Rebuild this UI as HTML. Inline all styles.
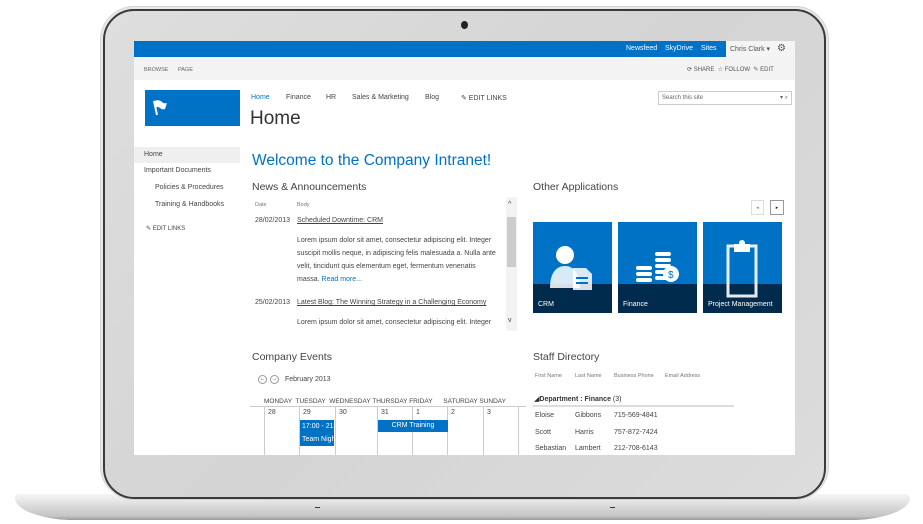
<!DOCTYPE html>
<html><head><meta charset="utf-8"><style>
*{margin:0;padding:0;box-sizing:border-box}
body{width:923px;height:524px;background:#fff;position:relative;overflow:hidden;font-family:"Liberation Sans",sans-serif;color:#444}
.a{position:absolute;white-space:nowrap}
#bez{left:100px;top:6px;width:729px;height:494px;border-radius:34px;background:#e8e8e8;border:1px solid #d4d4d4}
#bez2{left:103px;top:9px;width:723px;height:490px;border-radius:31px;background:linear-gradient(135deg,#dedede,#d4d4d4 50%,#dcdcdc);border:2px solid #3a3a3a}
#base{left:15px;top:494px;width:895px;height:26px;background:linear-gradient(#f6f6f6,#dedede 40%,#c4c4c4 85%,#999);border-radius:4px 4px 60px 60px/4px 4px 22px 22px}
#notch{left:390px;top:494px;width:148px;height:7px;background:linear-gradient(#bbb,#ececec);border-radius:0 0 8px 8px}
#scr{left:134px;top:41px;width:661px;height:414px;background:#fff;overflow:hidden}
.s{position:absolute;white-space:nowrap;font-size:7px;color:#444}
.tile{position:absolute;top:181px;width:79px;height:91px;background:#0072c6}
.tile .d{position:absolute;left:0;right:0;bottom:0;height:29px;background:#002b4d}
.tile .l{position:absolute;left:5px;bottom:5px;font-size:7px;color:#fff}
.cl{position:absolute;top:366px;width:1px;height:48px;background:#ccc}
</style></head><body>
<div class="a" id="base"></div>
<div class="a" id="notch"></div>
<div class="a" style="left:315px;top:507px;width:5px;height:1px;background:#333"></div>
<div class="a" style="left:610px;top:507px;width:5px;height:1px;background:#333"></div>
<div class="a" id="bez"></div>
<div class="a" id="bez2"></div>
<div class="a" style="left:461px;top:21px;width:7px;height:8px;border-radius:50%;background:#222"></div>
<div class="a" id="scr">
 <div class="s" style="left:0;top:0;width:661px;height:16px;background:#0072c6"></div>
 <div class="s" style="left:592px;top:0;width:69px;height:16px;background:#f4f4f4"></div>
 <div class="s" style="left:492px;top:4px;color:#fff">Newsfeed</div>
 <div class="s" style="left:531px;top:4px;color:#fff">SkyDrive</div>
 <div class="s" style="left:567px;top:4px;color:#fff">Sites</div>
 <div class="s" style="left:596px;top:4px;color:#555">Chris Clark ▾</div>
 <div class="s" style="left:643px;top:2px;font-size:10px;color:#555">⚙</div>
 <div class="s" style="left:0;top:16px;width:661px;height:23px;background:#f3f3f3"></div>
 <div class="s" style="left:10px;top:26px;font-size:5.5px;color:#666">BROWSE</div>
 <div class="s" style="left:44px;top:26px;font-size:5.5px;color:#666">PAGE</div>
 <div class="s" style="left:553px;top:25px;font-size:6px;color:#555">⟳ SHARE &nbsp;☆ FOLLOW &nbsp;✎ EDIT</div>
 <div class="s" style="left:11px;top:49px;width:95px;height:36px;background:#0072c6"></div>
 <svg class="s" style="left:18px;top:58px" width="16" height="18"><path d="M2 2 L5 16" stroke="#fff" stroke-width="2"/><path d="M2 2 Q7 0 10 3 Q12 5 15 4 L13 10 Q10 11 8 9 Q6 7 3 9Z" fill="#fff"/></svg>
 <div class="s" style="left:117px;top:53px;color:#0072c6">Home</div>
 <div class="s" style="left:152px;top:53px">Finance</div>
 <div class="s" style="left:192px;top:53px">HR</div>
 <div class="s" style="left:218px;top:53px">Sales &amp; Marketing</div>
 <div class="s" style="left:291px;top:53px">Blog</div>
 <div class="s" style="left:327px;top:53px">✎ EDIT LINKS</div>
 <div class="s" style="left:116px;top:67px;font-size:19px;color:#333">Home</div>
 <div class="s" style="left:524px;top:50px;width:134px;height:14px;border:1px solid #ccc;font-size:6px;color:#666;padding:3px 3px">Search this site<span style="position:absolute;right:3px;top:2px">▾ ⌕</span></div>
 <div class="s" style="left:0;top:106px;width:106px;height:16px;background:#efefef"></div>
 <div class="s" style="left:10px;top:110px">Home</div>
 <div class="s" style="left:10px;top:126px">Important Documents</div>
 <div class="s" style="left:21px;top:143px">Policies &amp; Procedures</div>
 <div class="s" style="left:21px;top:160px">Training &amp; Handbooks</div>
 <div class="s" style="left:12px;top:184px;font-size:6px">✎ EDIT LINKS</div>
 <div class="s" style="left:118px;top:111px;font-size:15.5px;color:#0072c6">Welcome to the Company Intranet!</div>
 <div class="s" style="left:118px;top:140px;font-size:10.5px;color:#444">News &amp; Announcements</div>
 <div class="s" style="left:121px;top:161px;font-size:5.5px;color:#777">Date</div>
 <div class="s" style="left:163px;top:161px;font-size:5.5px;color:#777">Body</div>
 <div class="s" style="left:121px;top:176px">28/02/2013</div>
 <div class="s" style="left:163px;top:176px;text-decoration:underline">Scheduled Downtime: CRM</div>
 <div class="s" style="left:163px;top:193px;line-height:13px;font-size:7px;white-space:normal;width:200px">Lorem ipsum dolor sit amet, consectetur adipiscing elit. Integer suscipit mollis neque, in adipiscing felis malesuada a. Nulla ante velit, tincidunt quis elementum eget, fermentum venenatis massa. <span style="color:#0072c6">Read more...</span></div>
 <div class="s" style="left:121px;top:258px">25/02/2013</div>
 <div class="s" style="left:163px;top:258px;text-decoration:underline">Latest Blog: The Winning Strategy in a Challenging Economy</div>
 <div class="s" style="left:163px;top:278px">Lorem ipsum dolor sit amet, consectetur adipiscing elit. Integer</div>
 <div class="s" style="left:372px;top:156px;width:11px;height:134px;background:#f3f3f3"></div>
 <div class="s" style="left:373px;top:176px;width:9px;height:50px;background:#ccc"></div>
 <div class="s" style="left:374px;top:160px">^</div>
 <div class="s" style="left:374px;top:276px">v</div>
 <div class="s" style="left:399px;top:140px;font-size:10.5px">Other Applications</div>
 <div class="s" style="left:617px;top:159px;width:13px;height:15px;border:1px solid #ddd;font-size:5px;color:#888;text-align:center;padding-top:4px">◂</div>
 <div class="s" style="left:636px;top:159px;width:14px;height:15px;border:1px solid #999;font-size:5px;color:#222;text-align:center;padding-top:4px">▸</div>
 <div class="tile" style="left:399px"><div class="d"></div>
  <svg style="position:absolute;left:16px;top:22px" width="48" height="46"><circle cx="16" cy="11" r="9" fill="#fff"/><path d="M1 44 C1 28 8 22 16 22 C24 22 30 28 31 44Z" fill="#fff" opacity=".85"/><path d="M24 24h13l6 6v16h-19z" fill="#fff" opacity=".85"/><rect x="27" y="33" width="12" height="2" fill="#0072c6"/><rect x="27" y="38" width="12" height="2" fill="#0072c6"/></svg>
  <div class="l">CRM</div></div>
 <div class="tile" style="left:484px"><div class="d"></div>
  <svg style="position:absolute;left:18px;top:28px" width="46" height="40" fill="#fff"><rect x="0" y="16" width="16" height="4" rx="2"/><rect x="0" y="22" width="16" height="4" rx="2"/><rect x="0" y="28" width="16" height="4" rx="2"/><rect x="19" y="2" width="16" height="4" rx="2"/><rect x="19" y="8" width="16" height="4" rx="2"/><rect x="19" y="14" width="16" height="4" rx="2"/><rect x="19" y="20" width="16" height="4" rx="2"/><rect x="19" y="26" width="16" height="4" rx="2"/><circle cx="35" cy="24" r="8"/><text x="32" y="28" font-size="10" fill="#0072c6" font-family="Liberation Sans">$</text></svg>
  <div class="l">Finance</div></div>
 <div class="tile" style="left:569px"><div class="d"></div>
  <svg style="position:absolute;left:23px;top:18px" width="34" height="58"><rect x="2" y="6" width="28" height="50" fill="none" stroke="#fff" stroke-width="3" opacity=".9"/><rect x="8" y="4" width="16" height="8" fill="#fff"/><circle cx="16" cy="3" r="3" fill="#fff"/></svg>
  <div class="l">Project Management</div></div>
 <div class="s" style="left:118px;top:310px;font-size:10.5px">Company Events</div>
 <div class="s" style="left:124px;top:334px;width:9px;height:9px;border:1px solid #999;border-radius:50%;font-size:6px;text-align:center;line-height:7px">←</div>
 <div class="s" style="left:136px;top:334px;width:9px;height:9px;border:1px solid #999;border-radius:50%;font-size:6px;text-align:center;line-height:7px">→</div>
 <div class="s" style="left:151px;top:335px">February 2013</div>
 <div class="s" style="left:130px;top:357px;font-size:6.5px">MONDAY &nbsp;TUESDAY &nbsp;WEDNESDAY THURSDAY FRIDAY &nbsp;&nbsp;&nbsp;&nbsp;&nbsp;SATURDAY SUNDAY</div>
 <div class="s" style="left:116px;top:365px;width:276px;height:1px;background:#ccc"></div>
 <div class="cl" style="left:130px"></div><div class="cl" style="left:165px"></div><div class="cl" style="left:201px"></div><div class="cl" style="left:243px"></div><div class="cl" style="left:278px"></div><div class="cl" style="left:313px"></div><div class="cl" style="left:349px"></div><div class="cl" style="left:384px"></div>
 <div class="s" style="left:134px;top:368px">28</div><div class="s" style="left:169px;top:368px">29</div><div class="s" style="left:205px;top:368px">30</div><div class="s" style="left:247px;top:368px">31</div><div class="s" style="left:282px;top:368px">1</div><div class="s" style="left:317px;top:368px">2</div><div class="s" style="left:353px;top:368px">3</div>
 <div class="s" style="left:166px;top:379px;width:34px;height:26px;background:#0072c6;color:#fff;overflow:hidden;line-height:13px;padding-left:2px">17:00 - 21:<br>Team Nigh</div>
 <div class="s" style="left:244px;top:379px;width:70px;height:12px;background:#0072c6;color:#fff;text-align:center;line-height:12px">CRM Training</div>
 <div class="s" style="left:399px;top:310px;font-size:10.5px">Staff Directory</div>
 <div class="s" style="left:401px;top:332px;font-size:5.5px;color:#777">First Name</div>
 <div class="s" style="left:441px;top:332px;font-size:5.5px;color:#777">Last Name</div>
 <div class="s" style="left:480px;top:332px;font-size:5.5px;color:#777">Business Phone</div>
 <div class="s" style="left:531px;top:332px;font-size:5.5px;color:#777">Email Address</div>
 <div class="s" style="left:400px;top:354px;color:#333">◢<b>Department : Finance</b> (3)</div>
 <div class="s" style="left:399px;top:364px;width:201px;height:2px;background:#ddd"></div>
 <div class="s" style="left:401px;top:371px">Eloise</div><div class="s" style="left:441px;top:371px">Gibbons</div><div class="s" style="left:480px;top:371px">715-569-4841</div>
 <div class="s" style="left:401px;top:388px">Scott</div><div class="s" style="left:441px;top:388px">Harris</div><div class="s" style="left:480px;top:388px">757-872-7424</div>
 <div class="s" style="left:401px;top:404px">Sebastian</div><div class="s" style="left:441px;top:404px">Lambert</div><div class="s" style="left:480px;top:404px">212-708-6143</div>
</div>
</body></html>
